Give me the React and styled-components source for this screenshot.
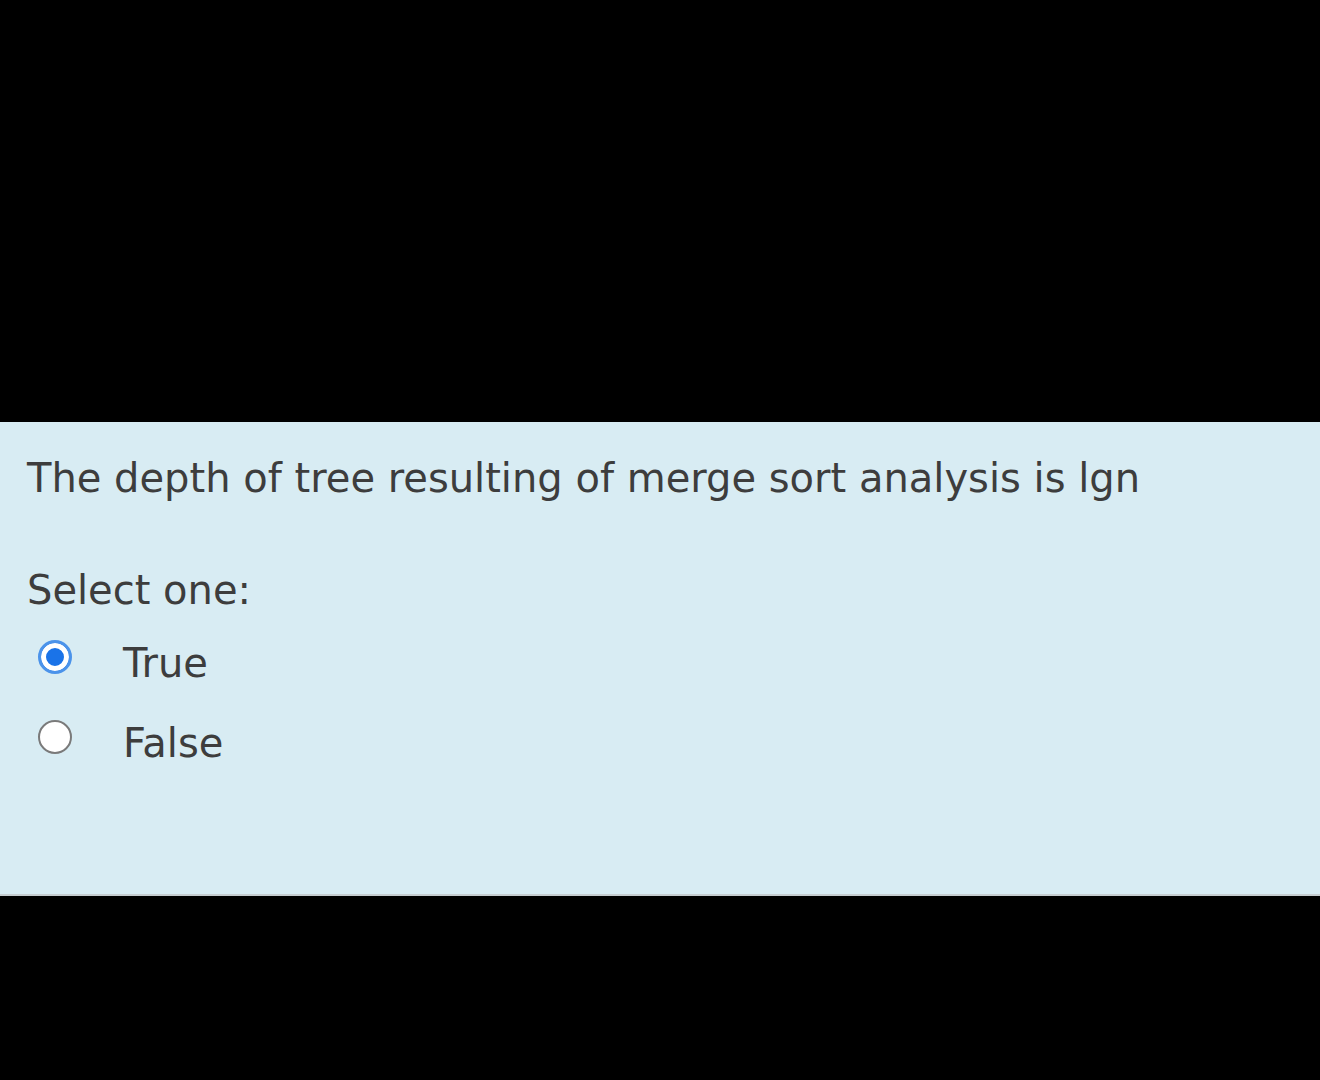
import React from "react";
import styled, { createGlobalStyle } from "styled-components";

const Global = createGlobalStyle`
  html, body { margin: 0; padding: 0; background: #000; }
  body { font-family: "DejaVu Sans", Verdana, sans-serif; }
`;

const Page = styled.div`
  width: 1320px;
  height: 1080px;
  background: #000;
  display: flex;
  flex-direction: column;
  padding-top: 422px;
  box-sizing: border-box;
`;

const Panel = styled.div`
  background: #d8ecf3;
  height: 474px;
  box-sizing: border-box;
  border-bottom: 2px solid #c6cdd0;
  padding: 32px 27px 0;
  color: #3d3d3d;
  font-size: 40px;
  line-height: 48px;
`;

const Question = styled.div``;

const Prompt = styled.div`
  margin-top: 64px;
`;

const Options = styled.div`
  display: flex;
  flex-direction: column;
  gap: 32px;
  margin-top: 25px;
`;

const Option = styled.label`
  display: flex;
  align-items: flex-start;
`;

const Radio = styled.span`
  width: 34px;
  height: 34px;
  box-sizing: border-box;
  border-radius: 50%;
  margin: 1px 51px 0 11px;
  flex: none;
  ${(p) =>
    p.$checked
      ? `background: #1a73e8; border: 3px solid #4b93ea; box-shadow: inset 0 0 0 5px #fff;`
      : `background: #fff; border: 2px solid #7a7a7a;`}
`;

export default function App() {
  return (
    <>
      <Global />
      <Page>
        <Panel>
          <Question>The depth of tree resulting of merge sort analysis is lgn</Question>
          <Prompt>Select one:</Prompt>
          <Options>
            <Option>
              <Radio $checked />
              True
            </Option>
            <Option>
              <Radio />
              False
            </Option>
          </Options>
        </Panel>
      </Page>
    </>
  );
}
